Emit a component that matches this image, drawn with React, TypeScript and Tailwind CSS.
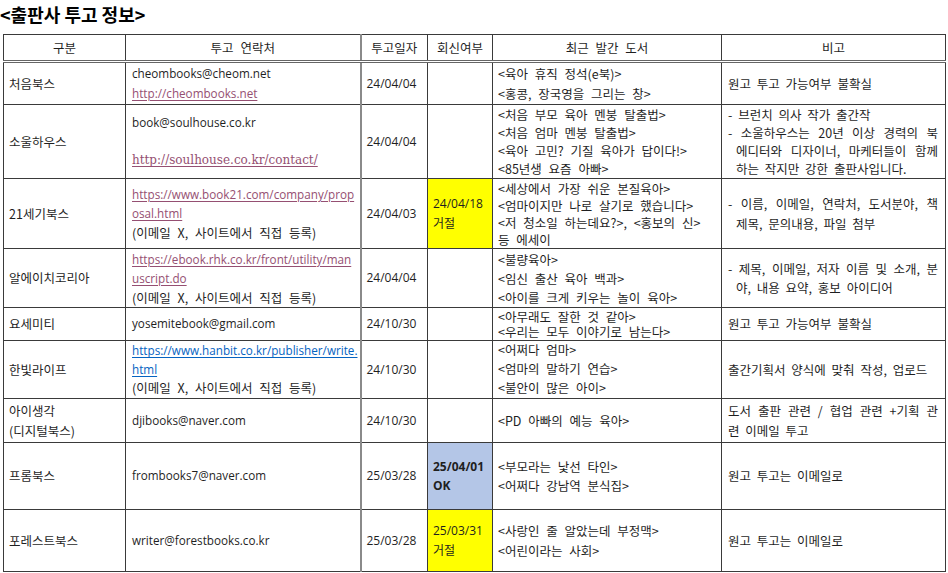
import type { ReactNode } from 'react';

const KR = "font-['Noto_Sans_CJK_KR',sans-serif]";
const LAT = "font-['Open_Sans','Noto_Sans_CJK_KR',sans-serif]";

type NoteLine = { text: string; indent?: boolean; justify?: boolean };

type Row = {
    h: number;
    name: string[];
    contact: ReactNode;
    contactLines: number;
    date: string;
    reply?: { lines: string[]; bg: string; bold?: boolean };
    books: string[];
    note: NoteLine[];
};

const Visited = ({ children }: { children: ReactNode }) => (
    <div className="text-[#954f72] underline underline-offset-2 decoration-1">{children}</div>
);

const Link = ({ children }: { children: ReactNode }) => (
    <div className="text-[#0563c1] underline underline-offset-2 decoration-1">{children}</div>
);

const DIRECT = <div className={`${KR} text-[12.5px] [word-spacing:4px]`}>(이메일 X, 사이트에서 직접 등록)</div>;

const ROWS: Row[] = [
    {
        h: 42,
        name: ['처음북스'],
        contact: (
            <>
                <div>cheombooks@cheom.net</div>
                <Visited>http://cheombooks.net</Visited>
            </>
        ),
        contactLines: 2,
        date: '24/04/04',
        books: ['<육아 휴직 정석(e북)>', '<홍콩, 장국영을 그리는 창>'],
        note: [{ text: '원고 투고 가능여부 불확실' }],
    },
    {
        h: 74,
        name: ['소울하우스'],
        contact: (
            <>
                <div>book@soulhouse.co.kr</div>
                <div>&nbsp;</div>
                <div className="font-['DejaVu_Serif',serif] text-[12px] text-[#954f72] underline underline-offset-2">
                    http://soulhouse.co.kr/contact/
                </div>
            </>
        ),
        contactLines: 3,
        date: '24/04/04',
        books: ['<처음 부모 육아 멘붕 탈출법>', '<처음 엄마 멘붕 탈출법>', '<육아 고민? 기질 육아가 답이다!>', '<85년생 요즘 아빠>'],
        note: [
            { text: '- 브런치 의사 작가 출간작' },
            { text: '- 소울하우스는 20년 이상 경력의 북', justify: true },
            { text: '에디터와 디자이너, 마케터들이 함께', indent: true, justify: true },
            { text: '하는 작지만 강한 출판사입니다.', indent: true },
        ],
    },
    {
        h: 70,
        name: ['21세기북스'],
        contact: (
            <>
                <Visited>https://www.book21.com/company/prop</Visited>
                <Visited>osal.html</Visited>
                {DIRECT}
            </>
        ),
        contactLines: 3,
        date: '24/04/03',
        reply: { lines: ['24/04/18', '거절'], bg: 'bg-[#ffff00]' },
        books: ['<세상에서 가장 쉬운 본질육아>', '<엄마이지만 나로 살기로 했습니다>', '<저 청소일 하는데요?>, <홍보의 신>', '등 에세이'],
        note: [
            { text: '- 이름, 이메일, 연락처, 도서분야, 책', justify: true },
            { text: '제목, 문의내용, 파일 첨부', indent: true },
        ],
    },
    {
        h: 59,
        name: ['알에이치코리아'],
        contact: (
            <>
                <Visited>https://ebook.rhk.co.kr/front/utility/man</Visited>
                <Visited>uscript.do</Visited>
                {DIRECT}
            </>
        ),
        contactLines: 3,
        date: '24/04/04',
        books: ['<불량육아>', '<임신 출산 육아 백과>', '<아이를 크게 키우는 놀이 육아>'],
        note: [
            { text: '- 제목, 이메일, 저자 이름 및 소개, 분', justify: true },
            { text: '야, 내용 요약, 홍보 아이디어', indent: true },
        ],
    },
    {
        h: 33,
        name: ['요세미티'],
        contact: <div>yosemitebook@gmail.com</div>,
        contactLines: 1,
        date: '24/10/30',
        books: ['<아무래도 잘한 것 같아>', '<우리는 모두 이야기로 남는다>'],
        note: [{ text: '원고 투고 가능여부 불확실' }],
    },
    {
        h: 58,
        name: ['한빛라이프'],
        contact: (
            <>
                <Link>https://www.hanbit.co.kr/publisher/write.</Link>
                <Link>html</Link>
                {DIRECT}
            </>
        ),
        contactLines: 3,
        date: '24/10/30',
        books: ['<어쩌다 엄마>', '<엄마의 말하기 연습>', '<불안이 많은 아이>'],
        note: [{ text: '출간기획서 양식에 맞춰 작성, 업로드' }],
    },
    {
        h: 44,
        name: ['아이생각', '(디지털북스)'],
        contact: <div>djibooks@naver.com</div>,
        contactLines: 1,
        date: '24/10/30',
        books: ['<PD 아빠의 예능 육아>'],
        note: [
            { text: '도서 출판 관련 / 협업 관련 +기획 관', justify: true },
            { text: '련 이메일 투고' },
        ],
    },
    {
        h: 67,
        name: ['프롬북스'],
        contact: <div>frombooks7@naver.com</div>,
        contactLines: 1,
        date: '25/03/28',
        reply: { lines: ['25/04/01', 'OK'], bg: 'bg-[#b4c6e7]', bold: true },
        books: ['<부모라는 낯선 타인>', '<어쩌다 강남역 분식집>'],
        note: [{ text: '원고 투고는 이메일로' }],
    },
    {
        h: 62,
        name: ['포레스트북스'],
        contact: <div>writer@forestbooks.co.kr</div>,
        contactLines: 1,
        date: '25/03/28',
        reply: { lines: ['25/03/31', '거절'], bg: 'bg-[#ffff00]' },
        books: ['<사랑인 줄 알았는데 부정맥>', '<어린이라는 사회>'],
        note: [{ text: '원고 투고는 이메일로' }],
    },
];

const cell = 'border border-[#3a3a3a] p-0 align-middle';
const head = `${cell} font-normal border-b-[3px] border-b-[#666] border-double`;

// line height shrinks when the lines would not fit the row (Excel lets them overflow)
function Box({ h, lines = 1, className = '', children }: { h: number; lines?: number; className?: string; children: ReactNode }) {
    const lh = Math.min(19.3, (h - 1) / lines);
    return (
        <div className={`flex flex-col justify-center ${className}`} style={{ height: h, lineHeight: `${lh}px` }}>
            {children}
        </div>
    );
}

export default function App() {
    return (
        <div className="w-[948px] h-[573px] bg-white text-[#1f1f1f] overflow-hidden">
            <h1 className={`${KR} font-bold text-[18px] leading-[22px] pt-[3px] h-[34px] text-black`}>
                &lt;출판사 투고 정보&gt;
            </h1>

            <table className="ml-[3px] w-[942px] table-fixed border-collapse text-[11.7px]">
                <colgroup>
                    <col className="w-[122px]" />
                    <col className="w-[235px]" />
                    <col className="w-[67px]" />
                    <col className="w-[65px]" />
                    <col className="w-[229px]" />
                    <col className="w-[224px]" />
                </colgroup>
                <thead>
                    <tr className={`${KR} text-center text-[12.5px] [word-spacing:4px]`}>
                        <th className={head}>
                            <Box h={25}>구분</Box>
                        </th>
                        <th className={`${head} border-r-2 border-r-[#8a8a8a]`}>
                            <Box h={25}>투고 연락처</Box>
                        </th>
                        <th className={head}>
                            <Box h={25}>투고일자</Box>
                        </th>
                        <th className={head}>
                            <Box h={25}>회신여부</Box>
                        </th>
                        <th className={head}>
                            <Box h={25}>최근 발간 도서</Box>
                        </th>
                        <th className={head}>
                            <Box h={25}>비고</Box>
                        </th>
                    </tr>
                </thead>
                <tbody>
                    {ROWS.map((r) => (
                        <tr key={r.name[0]}>
                            <td className={cell}>
                                <Box h={r.h - 1} lines={r.name.length} className={`${KR} text-[12.5px] pl-[5px]`}>
                                    {r.name.map((n) => (
                                        <div key={n}>{n}</div>
                                    ))}
                                </Box>
                            </td>
                            <td className={`${cell} border-r-2 border-r-[#8a8a8a]`}>
                                <Box h={r.h - 1} lines={r.contactLines} className={`${LAT} pl-[6px] whitespace-nowrap`}>
                                    {r.contact}
                                </Box>
                            </td>
                            <td className={cell}>
                                <Box h={r.h - 1} className={`${LAT} text-[12px] pl-[5px]`}>
                                    {r.date}
                                </Box>
                            </td>
                            <td className={`${cell} ${r.reply?.bg ?? ''}`}>
                                <Box
                                    h={r.h - 1}
                                    lines={2}
                                    className={`${LAT} text-[12px] pl-[5px] ${r.reply?.bold ? 'font-bold' : ''}`}
                                >
                                    {r.reply?.lines.map((l) => (
                                        <div key={l}>{l}</div>
                                    ))}
                                </Box>
                            </td>
                            <td className={cell}>
                                <Box
                                    h={r.h - 1}
                                    lines={r.books.length}
                                    className={`${KR} text-[12.5px] pl-[5px] whitespace-nowrap [word-spacing:4px]`}
                                >
                                    {r.books.map((b) => (
                                        <div key={b}>{b}</div>
                                    ))}
                                </Box>
                            </td>
                            <td className={cell}>
                                <Box
                                    h={r.h - 1}
                                    lines={r.note.length}
                                    className={`${KR} text-[12.5px] pl-[6px] pr-[7px] [word-spacing:3px]`}
                                >
                                    {r.note.map((n) => (
                                        <div
                                            key={n.text}
                                            className={`${n.indent ? 'pl-[8px]' : ''} ${
                                                n.justify ? 'text-justify [text-align-last:justify]' : ''
                                            } whitespace-nowrap`}
                                        >
                                            {n.text}
                                        </div>
                                    ))}
                                </Box>
                            </td>
                        </tr>
                    ))}
                </tbody>
            </table>
        </div>
    );
}
